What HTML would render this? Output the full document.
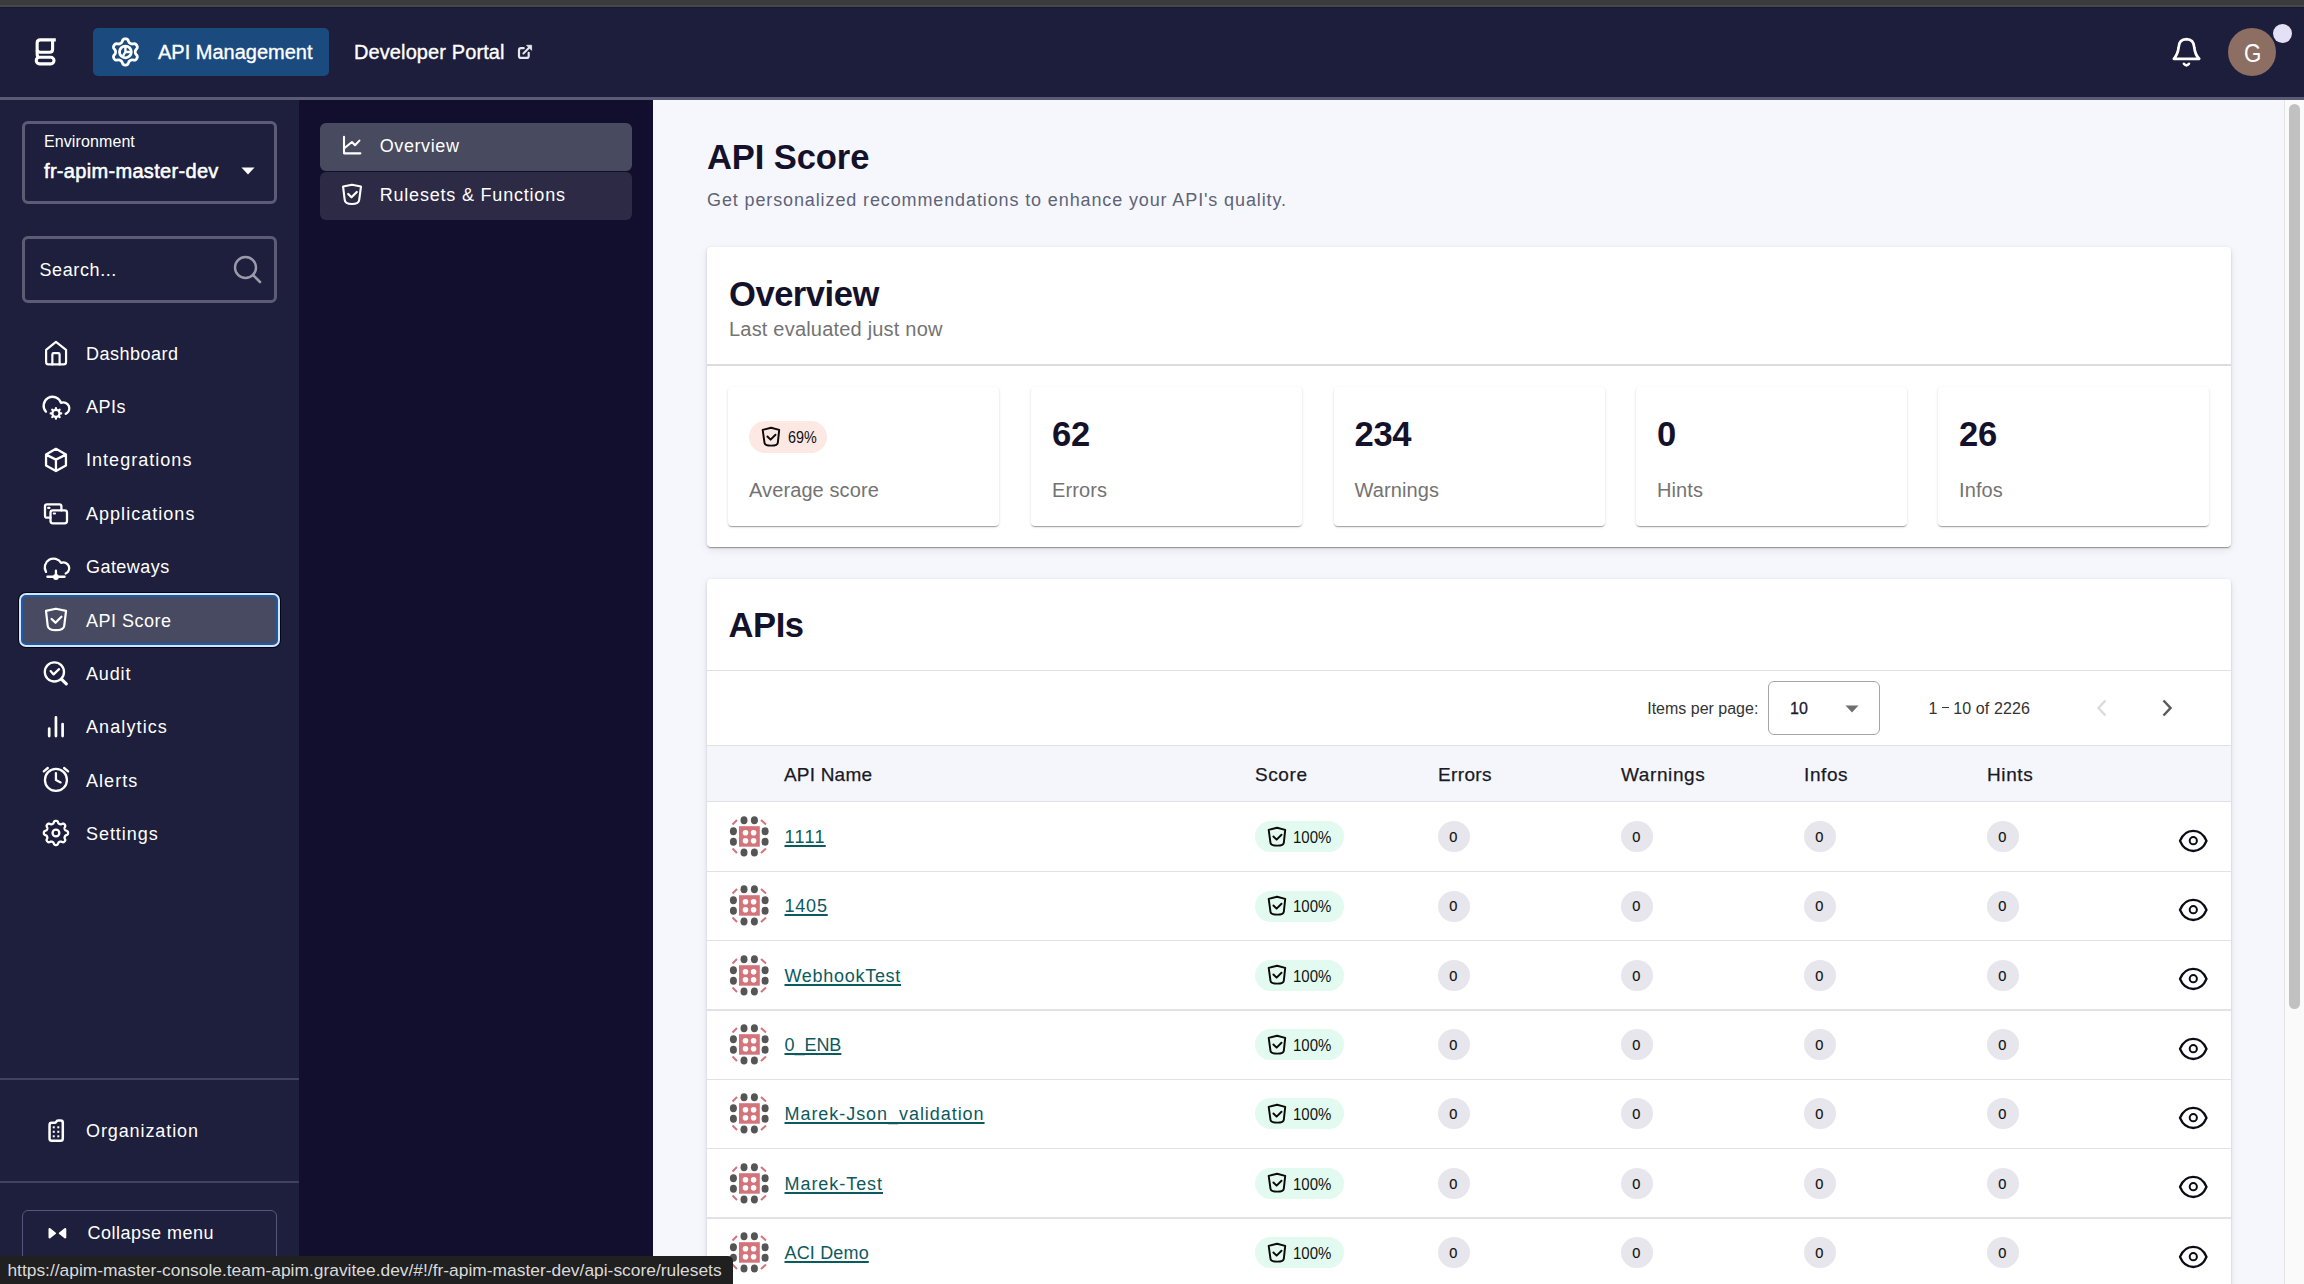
<!DOCTYPE html>
<html><head><meta charset="utf-8"><style>
html,body{margin:0;padding:0;width:2304px;height:1284px;overflow:hidden;background:#f6f7fc;font-family:"Liberation Sans", sans-serif;}
.r{position:absolute;display:block}
.t{position:absolute;white-space:nowrap;font-family:"Liberation Sans", sans-serif;}
</style></head><body>
<div class="r" style="left:0px;top:0px;width:2304px;height:5px;background:#3b3b3b"></div>
<div class="r" style="left:0px;top:5px;width:2304px;height:2px;background:#45464c"></div>
<div class="r" style="left:0px;top:7px;width:2304px;height:90px;background:#1d1e3b"></div>
<div class="r" style="left:0px;top:7px;width:2304px;height:1.2px;background:#191a2d"></div>
<div class="r" style="left:0px;top:97px;width:2304px;height:3px;background:#5a5c77"></div>
<div class="r" style="left:0px;top:100px;width:299px;height:1184px;background:#1e1f3c"></div>
<div class="r" style="left:299px;top:100px;width:354px;height:1184px;background:#120e2e"></div>
<div class="r" style="left:653px;top:100px;width:1631px;height:1184px;background:#f6f7fc"></div>
<div class="r" style="left:2284px;top:100px;width:20px;height:1184px;background:#fafafa;border-left:1px solid #e4e4e6;box-sizing:border-box"></div>
<div class="r" style="left:2289px;top:104px;width:11px;height:905px;background:#c1c1c1;border-radius:6px"></div>
<svg class="r" style="left:25px;top:32px;" width="40" height="40" viewBox="0 0 40 40"><path d="M30.8 7.9 H15.3 Q12.15 7.9 12.15 11 V17.3 Q12.15 20.25 15.1 20.25 H24.7 Q27.6 20.25 27.6 17.3 V7.9" fill="none" stroke="#fff" stroke-width="3.1" stroke-linejoin="round"/><path d="M12.15 18 V22.2 Q12.15 25.3 14.6 25.3 M14.6 25.3 H25.7 A3.3 3.3 0 0 1 25.7 31.9 H14.5 A3.3 3.3 0 0 1 14.6 25.3 Z" fill="none" stroke="#fff" stroke-width="3.1" stroke-linejoin="round"/></svg>
<div class="r" style="left:93px;top:28px;width:236px;height:48px;background:#1b4a7e;border-radius:5px"></div>
<svg class="r" style="left:105px;top:32px;" width="40" height="40" viewBox="0 0 40 40"><path d="M30.30 19.94 L30.30 20.20 L30.31 20.46 L30.33 20.72 L30.36 20.99 L30.42 21.26 L30.52 21.54 L30.68 21.84 L30.90 22.17 L31.19 22.53 L31.51 22.92 L31.82 23.32 L32.07 23.73 L32.23 24.13 L32.30 24.51 L32.31 24.87 L32.26 25.22 L32.17 25.55 L32.05 25.88 L31.91 26.19 L31.74 26.49 L31.56 26.78 L31.37 27.06 L31.15 27.33 L30.90 27.57 L30.63 27.79 L30.31 27.96 L29.94 28.09 L29.51 28.15 L29.04 28.14 L28.53 28.07 L28.04 27.99 L27.58 27.92 L27.19 27.89 L26.85 27.91 L26.56 27.96 L26.29 28.05 L26.04 28.15 L25.81 28.26 L25.58 28.39 L25.35 28.51 L25.13 28.65 L24.91 28.78 L24.69 28.93 L24.48 29.09 L24.27 29.28 L24.07 29.51 L23.89 29.79 L23.72 30.15 L23.55 30.58 L23.38 31.05 L23.18 31.52 L22.95 31.94 L22.69 32.28 L22.39 32.53 L22.08 32.72 L21.76 32.85 L21.42 32.94 L21.08 33.00 L20.74 33.03 L20.40 33.04 L20.06 33.03 L19.72 33.00 L19.38 32.94 L19.04 32.85 L18.72 32.72 L18.41 32.53 L18.11 32.28 L17.85 31.94 L17.62 31.52 L17.42 31.05 L17.25 30.58 L17.08 30.15 L16.91 29.79 L16.73 29.51 L16.53 29.28 L16.32 29.09 L16.11 28.93 L15.89 28.78 L15.67 28.65 L15.45 28.51 L15.22 28.39 L14.99 28.26 L14.76 28.15 L14.51 28.05 L14.24 27.96 L13.95 27.91 L13.61 27.89 L13.22 27.92 L12.76 27.99 L12.27 28.07 L11.76 28.14 L11.29 28.15 L10.86 28.09 L10.49 27.96 L10.17 27.79 L9.90 27.57 L9.65 27.33 L9.43 27.06 L9.24 26.78 L9.06 26.49 L8.89 26.19 L8.75 25.88 L8.63 25.55 L8.54 25.22 L8.49 24.87 L8.50 24.51 L8.57 24.13 L8.73 23.73 L8.98 23.32 L9.29 22.92 L9.61 22.53 L9.90 22.17 L10.12 21.84 L10.28 21.54 L10.38 21.26 L10.44 20.99 L10.47 20.72 L10.49 20.46 L10.50 20.20 L10.50 19.94 L10.50 19.68 L10.49 19.42 L10.47 19.16 L10.44 18.89 L10.38 18.62 L10.28 18.34 L10.12 18.04 L9.90 17.71 L9.61 17.35 L9.29 16.96 L8.98 16.56 L8.73 16.15 L8.57 15.75 L8.50 15.37 L8.49 15.01 L8.54 14.66 L8.63 14.33 L8.75 14.00 L8.89 13.69 L9.06 13.39 L9.24 13.10 L9.43 12.82 L9.65 12.55 L9.90 12.31 L10.17 12.09 L10.49 11.92 L10.86 11.79 L11.29 11.73 L11.76 11.74 L12.27 11.81 L12.76 11.89 L13.22 11.96 L13.61 11.99 L13.95 11.97 L14.24 11.92 L14.51 11.83 L14.76 11.73 L14.99 11.62 L15.22 11.49 L15.45 11.37 L15.67 11.23 L15.89 11.10 L16.11 10.95 L16.32 10.79 L16.53 10.60 L16.73 10.37 L16.91 10.09 L17.08 9.73 L17.25 9.30 L17.42 8.83 L17.62 8.36 L17.85 7.94 L18.11 7.60 L18.41 7.35 L18.72 7.16 L19.04 7.03 L19.38 6.94 L19.72 6.88 L20.06 6.85 L20.40 6.84 L20.74 6.85 L21.08 6.88 L21.42 6.94 L21.76 7.03 L22.08 7.16 L22.39 7.35 L22.69 7.60 L22.95 7.94 L23.18 8.36 L23.38 8.83 L23.55 9.30 L23.72 9.73 L23.89 10.09 L24.07 10.37 L24.27 10.60 L24.48 10.79 L24.69 10.95 L24.91 11.10 L25.13 11.23 L25.35 11.37 L25.58 11.49 L25.81 11.62 L26.04 11.73 L26.29 11.83 L26.56 11.92 L26.85 11.97 L27.19 11.99 L27.58 11.96 L28.04 11.89 L28.53 11.81 L29.04 11.74 L29.51 11.73 L29.94 11.79 L30.31 11.92 L30.63 12.09 L30.90 12.31 L31.15 12.55 L31.37 12.82 L31.56 13.10 L31.74 13.39 L31.91 13.69 L32.05 14.00 L32.17 14.33 L32.26 14.66 L32.31 15.01 L32.30 15.37 L32.23 15.75 L32.07 16.15 L31.82 16.56 L31.51 16.96 L31.19 17.35 L30.90 17.71 L30.68 18.04 L30.52 18.34 L30.42 18.62 L30.36 18.89 L30.33 19.16 L30.31 19.42 L30.30 19.68 Z" fill="none" stroke="#fff" stroke-width="2.8" stroke-linejoin="round"/><circle cx="20.4" cy="19.94" r="5.9" fill="none" stroke="#fff" stroke-width="2.8"/><path d="M20.4 14.5 V19.94 H25.5 M20.4 19.94 L18 24" fill="none" stroke="#fff" stroke-width="2.4"/></svg>
<div class="t" style="left:158px;top:42.07px;font-size:20px;line-height:20px;color:#fff;font-weight:normal;-webkit-text-stroke:0.35px #fff;letter-spacing:0px">API Management</div>
<div class="t" style="left:354px;top:42.07px;font-size:20px;line-height:20px;color:#fff;font-weight:normal;-webkit-text-stroke:0.35px #fff;letter-spacing:0.1px">Developer Portal</div>
<svg class="r" style="left:505px;top:32px;" width="40" height="40" viewBox="0 0 40 40"><path d="M18.7 16.2 H16 Q14 16.2 14 18.2 V23.9 Q14 25.9 16 25.9 H21.7 Q23.7 25.9 23.7 23.9 V20.8" fill="none" stroke="#e6e6f0" stroke-width="2.2" stroke-linecap="round"/><path d="M18.4 21.5 L24.5 15.3" stroke="#e6e6f0" stroke-width="2" stroke-linecap="round"/><path d="M21.6 13.3 H26.6 V18.3 Z" fill="#e6e6f0" stroke="#e6e6f0" stroke-width="0.8" stroke-linejoin="round"/></svg>
<svg class="r" style="left:2166px;top:32px;" width="40" height="40" viewBox="0 0 40 40"><path d="M7.8 26.8 Q11.8 22.5 12.6 15.5 Q13 7.3 20.4 7.2 Q27.8 7.3 28.3 15.5 Q29 22.5 33.2 26.8 Z" fill="none" stroke="#fff" stroke-width="2.7" stroke-linejoin="round"/><path d="M17.9 31.8 Q20.4 35 23 31.8" fill="none" stroke="#fff" stroke-width="2.6" stroke-linecap="round"/></svg>
<div class="r" style="left:2228px;top:28px;width:48px;height:48px;background:#8d6e63;border-radius:50%"></div>
<div class="t" style="left:2244px;top:39.59px;font-size:26px;line-height:26px;color:#fff;font-weight:normal;transform:scaleX(0.86);transform-origin:0 0">G</div>
<div class="r" style="left:2273px;top:24px;width:19px;height:19px;background:#e4e1f6;border-radius:50%"></div>
<div class="r" style="left:22px;top:121px;width:255px;height:83px;border:3.5px solid #5c5c76;border-radius:6px;box-sizing:border-box"></div>
<div class="t" style="left:44px;top:134.06px;font-size:16px;line-height:16px;color:#fff;font-weight:normal;letter-spacing:0.1px">Environment</div>
<div class="t" style="left:44px;top:161.07px;font-size:20px;line-height:20px;color:#fff;font-weight:normal;letter-spacing:0.32px;-webkit-text-stroke:0.55px #fff">fr-apim-master-dev</div>
<svg class="r" style="left:241px;top:167px;" width="14" height="8" viewBox="0 0 14 8"><path d="M0.5 0.5 H13.5 L7 7.5 Z" fill="#fff"/></svg>
<div class="r" style="left:22px;top:236px;width:255px;height:67px;border:3.5px solid #5c5c76;border-radius:6px;box-sizing:border-box"></div>
<div class="t" style="left:39.5px;top:260.76px;font-size:18px;line-height:18px;color:#fff;font-weight:normal;letter-spacing:0.6px">Search...</div>
<svg class="r" style="left:232px;top:254px;" width="32" height="32" viewBox="0 0 32 32"><circle cx="13.5" cy="13.5" r="10.5" fill="none" stroke="#9a9aaa" stroke-width="2.4"/><path d="M21 21 L28 28" stroke="#9a9aaa" stroke-width="2.6" stroke-linecap="round"/></svg>
<svg class="r" style="left:36px;top:335px;" width="40" height="40" viewBox="0 0 40 40"><path d="M10.1 14.8 L19.94 6.9 L30.06 14.8 V27 Q30.06 29.4 27.6 29.4 H12.5 Q10.1 29.4 10.1 27 Z" fill="none" stroke="#fff" stroke-width="2.2" stroke-linecap="round" stroke-linejoin="round"/><path d="M16.35 29.4 V19.4 Q16.35 18.07 17.7 18.07 H22.2 Q23.6 18.07 23.6 19.4 V29.4" fill="none" stroke="#fff" stroke-width="2.2" stroke-linecap="round" stroke-linejoin="round"/></svg>
<div class="t" style="left:86px;top:344.56px;font-size:18px;line-height:18px;color:#fff;font-weight:normal;letter-spacing:0.5px">Dashboard</div>
<svg class="r" style="left:36px;top:388px;" width="40" height="40" viewBox="0 0 40 40"><path d="M10 23.7 A8.9 8.9 0 1 1 25 14.9 A5.8 5.8 0 0 1 29.7 25.9" fill="none" stroke="#fff" stroke-width="2.3" stroke-linecap="round" stroke-linejoin="round"/><path fill="#fff" fill-rule="evenodd" d="M26.24 25.40 L26.24 25.56 L26.22 25.73 L26.19 25.89 L26.14 26.05 L26.03 26.20 L25.83 26.33 L25.49 26.43 L25.08 26.49 L24.74 26.55 L24.53 26.63 L24.41 26.73 L24.34 26.83 L24.29 26.94 L24.24 27.05 L24.19 27.16 L24.14 27.27 L24.10 27.38 L24.06 27.50 L24.04 27.63 L24.06 27.78 L24.15 27.98 L24.35 28.26 L24.59 28.60 L24.77 28.91 L24.82 29.14 L24.78 29.32 L24.71 29.47 L24.61 29.61 L24.51 29.74 L24.39 29.85 L24.28 29.97 L24.15 30.07 L24.01 30.17 L23.86 30.24 L23.68 30.28 L23.45 30.23 L23.14 30.05 L22.80 29.81 L22.52 29.61 L22.32 29.52 L22.17 29.50 L22.04 29.52 L21.92 29.56 L21.81 29.60 L21.70 29.65 L21.59 29.70 L21.48 29.75 L21.37 29.80 L21.27 29.87 L21.17 29.99 L21.09 30.20 L21.03 30.54 L20.97 30.95 L20.87 31.29 L20.74 31.49 L20.59 31.60 L20.43 31.65 L20.27 31.68 L20.10 31.70 L19.94 31.70 L19.78 31.70 L19.61 31.68 L19.45 31.65 L19.29 31.60 L19.14 31.49 L19.01 31.29 L18.91 30.95 L18.85 30.54 L18.79 30.20 L18.71 29.99 L18.61 29.87 L18.51 29.80 L18.40 29.75 L18.29 29.70 L18.18 29.65 L18.07 29.60 L17.96 29.56 L17.84 29.52 L17.71 29.50 L17.56 29.52 L17.36 29.61 L17.08 29.81 L16.74 30.05 L16.43 30.23 L16.20 30.28 L16.02 30.24 L15.87 30.17 L15.73 30.07 L15.60 29.97 L15.49 29.85 L15.37 29.74 L15.27 29.61 L15.17 29.47 L15.10 29.32 L15.06 29.14 L15.11 28.91 L15.29 28.60 L15.53 28.26 L15.73 27.98 L15.82 27.78 L15.84 27.63 L15.82 27.50 L15.78 27.38 L15.74 27.27 L15.69 27.16 L15.64 27.05 L15.59 26.94 L15.54 26.83 L15.47 26.73 L15.35 26.63 L15.14 26.55 L14.80 26.49 L14.39 26.43 L14.05 26.33 L13.85 26.20 L13.74 26.05 L13.69 25.89 L13.66 25.73 L13.64 25.56 L13.64 25.40 L13.64 25.24 L13.66 25.07 L13.69 24.91 L13.74 24.75 L13.85 24.60 L14.05 24.47 L14.39 24.37 L14.80 24.31 L15.14 24.25 L15.35 24.17 L15.47 24.07 L15.54 23.97 L15.59 23.86 L15.64 23.75 L15.69 23.64 L15.74 23.53 L15.78 23.42 L15.82 23.30 L15.84 23.17 L15.82 23.02 L15.73 22.82 L15.53 22.54 L15.29 22.20 L15.11 21.89 L15.06 21.66 L15.10 21.48 L15.17 21.33 L15.27 21.19 L15.37 21.06 L15.49 20.95 L15.60 20.83 L15.73 20.73 L15.87 20.63 L16.02 20.56 L16.20 20.52 L16.43 20.57 L16.74 20.75 L17.08 20.99 L17.36 21.19 L17.56 21.28 L17.71 21.30 L17.84 21.28 L17.96 21.24 L18.07 21.20 L18.18 21.15 L18.29 21.10 L18.40 21.05 L18.51 21.00 L18.61 20.93 L18.71 20.81 L18.79 20.60 L18.85 20.26 L18.91 19.85 L19.01 19.51 L19.14 19.31 L19.29 19.20 L19.45 19.15 L19.61 19.12 L19.78 19.10 L19.94 19.10 L20.10 19.10 L20.27 19.12 L20.43 19.15 L20.59 19.20 L20.74 19.31 L20.87 19.51 L20.97 19.85 L21.03 20.26 L21.09 20.60 L21.17 20.81 L21.27 20.93 L21.37 21.00 L21.48 21.05 L21.59 21.10 L21.70 21.15 L21.81 21.20 L21.92 21.24 L22.04 21.28 L22.17 21.30 L22.32 21.28 L22.52 21.19 L22.80 20.99 L23.14 20.75 L23.45 20.57 L23.68 20.52 L23.86 20.56 L24.01 20.63 L24.15 20.73 L24.28 20.83 L24.39 20.95 L24.51 21.06 L24.61 21.19 L24.71 21.33 L24.78 21.48 L24.82 21.66 L24.77 21.89 L24.59 22.20 L24.35 22.54 L24.15 22.82 L24.06 23.02 L24.04 23.17 L24.06 23.30 L24.10 23.42 L24.14 23.53 L24.19 23.64 L24.24 23.75 L24.29 23.86 L24.34 23.97 L24.41 24.07 L24.53 24.17 L24.74 24.25 L25.08 24.31 L25.49 24.37 L25.83 24.47 L26.03 24.60 L26.14 24.75 L26.19 24.91 L26.22 25.07 L26.24 25.24 Z M22.4 25.4 A2.46 2.46 0 1 0 17.48 25.4 A2.46 2.46 0 1 0 22.4 25.4 Z"/></svg>
<div class="t" style="left:86px;top:397.96px;font-size:18px;line-height:18px;color:#fff;font-weight:normal;letter-spacing:0.5px">APIs</div>
<svg class="r" style="left:36px;top:441px;" width="40" height="40" viewBox="0 0 40 40"><path d="M19.94 7.8 L29.95 13.6 V24.4 L19.94 30 L10.05 24.4 V13.6 Z M10.05 13.6 L19.94 18.6 L29.95 13.6 M19.94 18.6 V30" fill="none" stroke="#fff" stroke-width="2.3" stroke-linecap="round" stroke-linejoin="round"/></svg>
<div class="t" style="left:86px;top:451.36px;font-size:18px;line-height:18px;color:#fff;font-weight:normal;letter-spacing:1.03px">Integrations</div>
<svg class="r" style="left:36px;top:494px;" width="40" height="40" viewBox="0 0 40 40"><path d="M14.5 23.7 H11 Q9 23.7 9 21.7 V12.3 Q9 10.3 11 10.3 H23.4 Q25.4 10.3 25.4 12.3 V16.4" fill="none" stroke="#fff" stroke-width="2.3" stroke-linecap="round" stroke-linejoin="round"/><rect x="14.5" y="16.4" width="16.5" height="13" rx="2.3" fill="none" stroke="#fff" stroke-width="2.3" stroke-linecap="round" stroke-linejoin="round"/><path d="M12.2 13.9 h1.2 M17.8 19.5 h1.2" fill="none" stroke="#fff" stroke-width="2.2" stroke-linecap="round" stroke-linejoin="round"/></svg>
<div class="t" style="left:86px;top:504.76px;font-size:18px;line-height:18px;color:#fff;font-weight:normal;letter-spacing:1.03px">Applications</div>
<svg class="r" style="left:36px;top:547px;" width="40" height="40" viewBox="0 0 40 40"><path d="M10 24.9 A8.6 8.6 0 1 1 25.2 15.9 A5.4 5.4 0 0 1 29.7 26.5" fill="none" stroke="#fff" stroke-width="2.3" stroke-linecap="round" stroke-linejoin="round"/><path d="M19.94 23.7 V29 M11.4 29.75 H28.6" fill="none" stroke="#fff" stroke-width="2.3" stroke-linecap="round" stroke-linejoin="round"/><circle cx="19.94" cy="30" r="2.9" fill="#fff"/></svg>
<div class="t" style="left:86px;top:558.16px;font-size:18px;line-height:18px;color:#fff;font-weight:normal;letter-spacing:0.45px">Gateways</div>
<div class="r" style="left:19px;top:593px;width:261px;height:54px;border:2px solid #cfe4ff;border-radius:7px;box-sizing:border-box;background:#474a61;box-shadow:0 0 0 1px #05050f, inset 0 0 0 2px #1e5aa6"></div>
<svg class="r" style="left:36px;top:600px;" width="40" height="40" viewBox="0 0 40 40"><path d="M10 10.9 L19.94 8.7 L30.06 10.9 L28.2 25.8 Q27.6 30.2 19.94 30.2 Q12.3 30.2 11.7 25.8 Z" fill="none" stroke="#fff" stroke-width="2.2" stroke-linecap="round" stroke-linejoin="round"/><path d="M15.6 19 L19.5 22.7 L25.4 16.8" fill="none" stroke="#fff" stroke-width="2.3" stroke-linecap="round" stroke-linejoin="round"/></svg>
<div class="t" style="left:86px;top:611.56px;font-size:18px;line-height:18px;color:#fff;font-weight:normal;letter-spacing:0.5px">API Score</div>
<svg class="r" style="left:36px;top:654px;" width="40" height="40" viewBox="0 0 40 40"><circle cx="18.4" cy="17.9" r="9.6" fill="none" stroke="#fff" stroke-width="2.3" stroke-linecap="round" stroke-linejoin="round"/><path d="M25.4 25.2 L30.3 29.9" fill="none" stroke="#fff" stroke-width="3.2" stroke-linecap="round" stroke-linejoin="round"/><path d="M14.6 17.1 L17.6 20.4 L23.05 15.2" fill="none" stroke="#fff" stroke-width="2.3" stroke-linecap="round" stroke-linejoin="round"/></svg>
<div class="t" style="left:86px;top:664.96px;font-size:18px;line-height:18px;color:#fff;font-weight:normal;letter-spacing:0.85px">Audit</div>
<svg class="r" style="left:36px;top:707px;" width="40" height="40" viewBox="0 0 40 40"><path d="M13.2 21.5 V29.1 M19.94 10.3 V29.1 M26.6 17 V29.1" fill="none" stroke="#fff" stroke-width="2.7" stroke-linecap="round" stroke-linejoin="round"/></svg>
<div class="t" style="left:86px;top:718.36px;font-size:18px;line-height:18px;color:#fff;font-weight:normal;letter-spacing:1.1px">Analytics</div>
<svg class="r" style="left:36px;top:760px;" width="40" height="40" viewBox="0 0 40 40"><circle cx="19.94" cy="19.94" r="11" fill="none" stroke="#fff" stroke-width="2.3" stroke-linecap="round" stroke-linejoin="round"/><path d="M19.94 13.1 V19.94 L24.6 22.4" fill="none" stroke="#fff" stroke-width="2.3" stroke-linecap="round" stroke-linejoin="round"/><path d="M7.8 11.4 L11.8 8 M32.1 11.4 L28.1 8" fill="none" stroke="#fff" stroke-width="2.3" stroke-linecap="round" stroke-linejoin="round"/></svg>
<div class="t" style="left:86px;top:771.76px;font-size:18px;line-height:18px;color:#fff;font-weight:normal;letter-spacing:1.05px">Alerts</div>
<svg class="r" style="left:36px;top:813px;" width="40" height="40" viewBox="0 0 40 40"><path d="M32.04 19.94 L32.03 20.26 L31.99 20.57 L31.92 20.88 L31.80 21.19 L31.59 21.47 L31.27 21.73 L30.83 21.96 L30.33 22.15 L29.89 22.33 L29.55 22.52 L29.32 22.72 L29.15 22.93 L29.02 23.16 L28.91 23.38 L28.81 23.61 L28.72 23.85 L28.63 24.09 L28.57 24.34 L28.53 24.61 L28.56 24.91 L28.66 25.28 L28.85 25.73 L29.07 26.21 L29.22 26.68 L29.26 27.09 L29.20 27.44 L29.08 27.74 L28.91 28.01 L28.71 28.26 L28.50 28.50 L28.26 28.71 L28.01 28.91 L27.74 29.08 L27.44 29.20 L27.09 29.26 L26.68 29.22 L26.21 29.07 L25.73 28.85 L25.28 28.66 L24.91 28.56 L24.61 28.53 L24.34 28.57 L24.09 28.63 L23.85 28.72 L23.61 28.81 L23.38 28.91 L23.16 29.02 L22.93 29.15 L22.72 29.32 L22.52 29.55 L22.33 29.89 L22.15 30.33 L21.96 30.83 L21.73 31.27 L21.47 31.59 L21.19 31.80 L20.88 31.92 L20.57 31.99 L20.26 32.03 L19.94 32.04 L19.62 32.03 L19.31 31.99 L19.00 31.92 L18.69 31.80 L18.41 31.59 L18.15 31.27 L17.92 30.83 L17.73 30.33 L17.55 29.89 L17.36 29.55 L17.16 29.32 L16.95 29.15 L16.72 29.02 L16.50 28.91 L16.27 28.81 L16.03 28.72 L15.79 28.63 L15.54 28.57 L15.27 28.53 L14.97 28.56 L14.60 28.66 L14.15 28.85 L13.67 29.07 L13.20 29.22 L12.79 29.26 L12.44 29.20 L12.14 29.08 L11.87 28.91 L11.62 28.71 L11.38 28.50 L11.17 28.26 L10.97 28.01 L10.80 27.74 L10.68 27.44 L10.62 27.09 L10.66 26.68 L10.81 26.21 L11.03 25.73 L11.22 25.28 L11.32 24.91 L11.35 24.61 L11.31 24.34 L11.25 24.09 L11.16 23.85 L11.07 23.61 L10.97 23.38 L10.86 23.16 L10.73 22.93 L10.56 22.72 L10.33 22.52 L9.99 22.33 L9.55 22.15 L9.05 21.96 L8.61 21.73 L8.29 21.47 L8.08 21.19 L7.96 20.88 L7.89 20.57 L7.85 20.26 L7.84 19.94 L7.85 19.62 L7.89 19.31 L7.96 19.00 L8.08 18.69 L8.29 18.41 L8.61 18.15 L9.05 17.92 L9.55 17.73 L9.99 17.55 L10.33 17.36 L10.56 17.16 L10.73 16.95 L10.86 16.72 L10.97 16.50 L11.07 16.27 L11.16 16.03 L11.25 15.79 L11.31 15.54 L11.35 15.27 L11.32 14.97 L11.22 14.60 L11.03 14.15 L10.81 13.67 L10.66 13.20 L10.62 12.79 L10.68 12.44 L10.80 12.14 L10.97 11.87 L11.17 11.62 L11.38 11.38 L11.62 11.17 L11.87 10.97 L12.14 10.80 L12.44 10.68 L12.79 10.62 L13.20 10.66 L13.67 10.81 L14.15 11.03 L14.60 11.22 L14.97 11.32 L15.27 11.35 L15.54 11.31 L15.79 11.25 L16.03 11.16 L16.27 11.07 L16.50 10.97 L16.72 10.86 L16.95 10.73 L17.16 10.56 L17.36 10.33 L17.55 9.99 L17.73 9.55 L17.92 9.05 L18.15 8.61 L18.41 8.29 L18.69 8.08 L19.00 7.96 L19.31 7.89 L19.62 7.85 L19.94 7.84 L20.26 7.85 L20.57 7.89 L20.88 7.96 L21.19 8.08 L21.47 8.29 L21.73 8.61 L21.96 9.05 L22.15 9.55 L22.33 9.99 L22.52 10.33 L22.72 10.56 L22.93 10.73 L23.16 10.86 L23.38 10.97 L23.61 11.07 L23.85 11.16 L24.09 11.25 L24.34 11.31 L24.61 11.35 L24.91 11.32 L25.28 11.22 L25.73 11.03 L26.21 10.81 L26.68 10.66 L27.09 10.62 L27.44 10.68 L27.74 10.80 L28.01 10.97 L28.26 11.17 L28.50 11.38 L28.71 11.62 L28.91 11.87 L29.08 12.14 L29.20 12.44 L29.26 12.79 L29.22 13.20 L29.07 13.67 L28.85 14.15 L28.66 14.60 L28.56 14.97 L28.53 15.27 L28.57 15.54 L28.63 15.79 L28.72 16.03 L28.81 16.27 L28.91 16.50 L29.02 16.72 L29.15 16.95 L29.32 17.16 L29.55 17.36 L29.89 17.55 L30.33 17.73 L30.83 17.92 L31.27 18.15 L31.59 18.41 L31.80 18.69 L31.92 19.00 L31.99 19.31 L32.03 19.62 Z" fill="none" stroke="#fff" stroke-width="2.3" stroke-linecap="round" stroke-linejoin="round"/><circle cx="19.94" cy="19.94" r="3.4" fill="none" stroke="#fff" stroke-width="2.3" stroke-linecap="round" stroke-linejoin="round"/></svg>
<div class="t" style="left:86px;top:825.16px;font-size:18px;line-height:18px;color:#fff;font-weight:normal;letter-spacing:0.95px">Settings</div>
<div class="r" style="left:0px;top:1078px;width:299px;height:2px;background:#414260"></div>
<div class="r" style="left:0px;top:1180.5px;width:299px;height:2px;background:#414260"></div>
<svg class="r" style="left:36px;top:1110px;" width="40" height="40" viewBox="0 0 40 40"><path d="M13.55 28.4 V15 Q13.55 12.8 15.7 12.8 H18.7 Q19.6 12.8 20.1 11.9 Q20.7 10.6 22.2 10.6 H24.7 Q26.8 10.6 26.8 12.7 V28.4 Q26.8 30.7 24.6 30.7 H15.8 Q13.55 30.7 13.55 28.4 Z" fill="none" stroke="#fff" stroke-width="2.5" stroke-linecap="round" stroke-linejoin="round"/><g fill="#fff"><rect x="16.75" y="16.3" width="2" height="2"/><rect x="21.3" y="16.3" width="2" height="2"/><rect x="16.75" y="20.8" width="2" height="2"/><rect x="21.3" y="20.8" width="2" height="2"/><rect x="16.75" y="25.3" width="2" height="2"/><rect x="21.3" y="25.3" width="2" height="2"/></g></svg>
<div class="t" style="left:86px;top:1121.76px;font-size:18px;line-height:18px;color:#fff;font-weight:normal;letter-spacing:0.9px">Organization</div>
<div class="r" style="left:22px;top:1209.5px;width:255px;height:80px;border:1.5px solid #55577a;border-radius:6px;box-sizing:border-box"></div>
<svg class="r" style="left:36px;top:1213px;" width="40" height="40" viewBox="0 0 40 40"><path d="M13.6 16.2 L18.9 20.25 L13.6 24.4 Z M29.2 16.2 L23.9 20.25 L29.2 24.4 Z" fill="#fff" stroke="#fff" stroke-width="2.2" stroke-linejoin="round"/></svg>
<div class="t" style="left:87.4px;top:1224.26px;font-size:18px;line-height:18px;color:#fff;font-weight:normal;letter-spacing:0.5px">Collapse menu</div>
<div class="r" style="left:320px;top:123px;width:312px;height:48px;background:#484a5f;border-radius:6px"></div>
<div class="r" style="left:320px;top:172px;width:312px;height:48px;background:#2c2a45;border-radius:6px"></div>
<svg class="r" style="left:332px;top:125px;" width="40" height="40" viewBox="0 0 40 40"><path d="M12 11.8 V28.35 H28.35 M12 23.5 L19.94 17 L23.05 20.25 L27.4 15.6" fill="none" stroke="#fff" stroke-width="2.1" stroke-linecap="round" stroke-linejoin="round"/></svg>
<div class="t" style="left:379.7px;top:136.96px;font-size:18px;line-height:18px;color:#fff;font-weight:normal;letter-spacing:0.6px">Overview</div>
<svg class="r" style="left:332px;top:175px;" width="40" height="40" viewBox="0 0 40 40"><path d="M11.06 11.5 L19.94 9.66 L29 11.5 L27.2 24.8 Q26.8 29 19.94 29 Q13.1 29 12.7 24.8 Z" fill="none" stroke="#fff" stroke-width="2.1" stroke-linecap="round" stroke-linejoin="round"/><path d="M16.2 19 L19.5 22.3 L24.8 17" fill="none" stroke="#fff" stroke-width="2.2" stroke-linecap="round" stroke-linejoin="round"/></svg>
<div class="t" style="left:379.7px;top:186.16px;font-size:18px;line-height:18px;color:#fff;font-weight:normal;letter-spacing:0.8px">Rulesets &amp; Functions</div>
<div class="t" style="left:707px;top:140.31px;font-size:34.6px;line-height:34.6px;color:#14112b;font-weight:bold;letter-spacing:-0.12px">API Score</div>
<div class="t" style="left:707px;top:191.16px;font-size:18px;line-height:18px;color:#5f6377;font-weight:normal;letter-spacing:0.88px">Get personalized recommendations to enhance your API&#39;s quality.</div>
<div class="r" style="left:707px;top:247px;width:1524px;height:300px;background:#fff;border-radius:4px;box-shadow:0 2px 1px -1px rgba(0,0,0,.2),0 1px 1px 0 rgba(0,0,0,.14),0 1px 3px 0 rgba(0,0,0,.12),0 3px 10px 0 rgba(20,20,60,.08)"></div>
<div class="t" style="left:729px;top:276.51px;font-size:34.6px;line-height:34.6px;color:#14112b;font-weight:bold;letter-spacing:-0.5px">Overview</div>
<div class="t" style="left:729px;top:319.07px;font-size:20px;line-height:20px;color:#737373;font-weight:normal;letter-spacing:0.2px">Last evaluated just now</div>
<div class="r" style="left:707px;top:364px;width:1524px;height:1.5px;background:#dcdce0"></div>
<div class="r" style="left:728px;top:387px;width:271px;height:139px;background:#fff;border-radius:4px;box-shadow:0 2px 1px -1px rgba(0,0,0,.2),0 1px 1px 0 rgba(0,0,0,.14),0 1px 3px 0 rgba(0,0,0,.12)"></div>
<div class="r" style="left:749px;top:420.5px;width:78px;height:32px;background:#fde8e3;border-radius:16px"></div>
<svg class="r" style="left:759.3px;top:424.5px;" width="24" height="24" viewBox="0 0 24 24"><path d="M3.7 4.9 L12.1 2.8 L20.2 4.9 L18.8 17.8 Q18.5 20.6 12.1 20.6 Q5.8 20.6 5.5 17.8 Z" fill="none" stroke="#0b0b0b" stroke-width="1.95" stroke-linejoin="round"/><path d="M8.4 11.5 L11.6 14.6 L16.5 9.7" fill="none" stroke="#0b0b0b" stroke-width="1.95" stroke-linecap="round" stroke-linejoin="round"/></svg>
<div class="t" style="left:787.6px;top:429.40px;font-size:16.3px;line-height:16.3px;color:#111;font-weight:normal;letter-spacing:0px;transform:scaleX(0.88);transform-origin:0 0">69%</div>
<div class="t" style="left:749px;top:480.27px;font-size:20px;line-height:20px;color:#737373;font-weight:normal;letter-spacing:0.1px">Average score</div>
<div class="r" style="left:1031px;top:387px;width:271px;height:139px;background:#fff;border-radius:4px;box-shadow:0 2px 1px -1px rgba(0,0,0,.2),0 1px 1px 0 rgba(0,0,0,.14),0 1px 3px 0 rgba(0,0,0,.12)"></div>
<div class="t" style="left:1052px;top:416.61px;font-size:34.6px;line-height:34.6px;color:#14112b;font-weight:bold;letter-spacing:-0.3px">62</div>
<div class="t" style="left:1052px;top:480.27px;font-size:20px;line-height:20px;color:#737373;font-weight:normal;letter-spacing:0.1px">Errors</div>
<div class="r" style="left:1333.5px;top:387px;width:271px;height:139px;background:#fff;border-radius:4px;box-shadow:0 2px 1px -1px rgba(0,0,0,.2),0 1px 1px 0 rgba(0,0,0,.14),0 1px 3px 0 rgba(0,0,0,.12)"></div>
<div class="t" style="left:1354.5px;top:416.61px;font-size:34.6px;line-height:34.6px;color:#14112b;font-weight:bold;letter-spacing:-0.3px">234</div>
<div class="t" style="left:1354.5px;top:480.27px;font-size:20px;line-height:20px;color:#737373;font-weight:normal;letter-spacing:0.1px">Warnings</div>
<div class="r" style="left:1636px;top:387px;width:271px;height:139px;background:#fff;border-radius:4px;box-shadow:0 2px 1px -1px rgba(0,0,0,.2),0 1px 1px 0 rgba(0,0,0,.14),0 1px 3px 0 rgba(0,0,0,.12)"></div>
<div class="t" style="left:1657px;top:416.61px;font-size:34.6px;line-height:34.6px;color:#14112b;font-weight:bold;letter-spacing:-0.3px">0</div>
<div class="t" style="left:1657px;top:480.27px;font-size:20px;line-height:20px;color:#737373;font-weight:normal;letter-spacing:0.1px">Hints</div>
<div class="r" style="left:1938px;top:387px;width:271px;height:139px;background:#fff;border-radius:4px;box-shadow:0 2px 1px -1px rgba(0,0,0,.2),0 1px 1px 0 rgba(0,0,0,.14),0 1px 3px 0 rgba(0,0,0,.12)"></div>
<div class="t" style="left:1959px;top:416.61px;font-size:34.6px;line-height:34.6px;color:#14112b;font-weight:bold;letter-spacing:-0.3px">26</div>
<div class="t" style="left:1959px;top:480.27px;font-size:20px;line-height:20px;color:#737373;font-weight:normal;letter-spacing:0.1px">Infos</div>
<div class="r" style="left:707px;top:579px;width:1524px;height:760px;background:#fff;border-radius:4px;box-shadow:0 2px 1px -1px rgba(0,0,0,.2),0 1px 1px 0 rgba(0,0,0,.14),0 1px 3px 0 rgba(0,0,0,.12),0 3px 10px 0 rgba(20,20,60,.08)"></div>
<div class="t" style="left:728.4px;top:608.31px;font-size:34.6px;line-height:34.6px;color:#14112b;font-weight:bold;letter-spacing:-0.4px">APIs</div>
<div class="r" style="left:707px;top:669.5px;width:1524px;height:1.5px;background:#e0e0e4"></div>
<div class="t" style="left:1647.2px;top:700.96px;font-size:16px;line-height:16px;color:#333;font-weight:normal;letter-spacing:0px">Items per page:</div>
<div class="r" style="left:1767.7px;top:680.6px;width:112px;height:54px;border:1.8px solid #a4a4a4;border-radius:6px;box-sizing:border-box"></div>
<div class="t" style="left:1790px;top:700.96px;font-size:16px;line-height:16px;color:#1a1a2e;font-weight:normal;-webkit-text-stroke:0.3px #1a1a2e">10</div>
<svg class="r" style="left:1845px;top:704.5px;" width="14" height="8" viewBox="0 0 14 8"><path d="M0.5 0.5 H13.5 L7 7.5 Z" fill="#6e6e6e"/></svg>
<div class="t" style="left:1928.6px;top:700.96px;font-size:16px;line-height:16px;color:#333;font-weight:normal;letter-spacing:0.1px">1<span style="display:inline-block;width:6.5px;height:1.8px;background:#333;vertical-align:5.6px;margin:0 4.3px 0 4.9px"></span>10 of 2226</div>
<svg class="r" style="left:2094px;top:698px;" width="16" height="20" viewBox="0 0 16 20"><path d="M11.5 2.5 L4.5 10 L11.5 17.5" fill="none" stroke="#dcdcdc" stroke-width="2.5"/></svg>
<svg class="r" style="left:2159px;top:698px;" width="16" height="20" viewBox="0 0 16 20"><path d="M4.5 2.5 L11.5 10 L4.5 17.5" fill="none" stroke="#5a5a5a" stroke-width="2.5"/></svg>
<div class="r" style="left:707px;top:745px;width:1524px;height:57px;background:#f5f6fb;border-top:1.5px solid #dfe0e4;border-bottom:1.5px solid #dfe0e4;box-sizing:border-box"></div>
<div class="t" style="left:784px;top:764.72px;font-size:19px;line-height:19px;color:#1a1a26;font-weight:normal;-webkit-text-stroke:0.25px #1a1a26;letter-spacing:0.2px">API Name</div>
<div class="t" style="left:1255px;top:764.72px;font-size:19px;line-height:19px;color:#1a1a26;font-weight:normal;-webkit-text-stroke:0.25px #1a1a26;letter-spacing:0.6px">Score</div>
<div class="t" style="left:1438px;top:764.72px;font-size:19px;line-height:19px;color:#1a1a26;font-weight:normal;-webkit-text-stroke:0.25px #1a1a26;letter-spacing:0.35px">Errors</div>
<div class="t" style="left:1621px;top:764.72px;font-size:19px;line-height:19px;color:#1a1a26;font-weight:normal;-webkit-text-stroke:0.25px #1a1a26;letter-spacing:0.6px">Warnings</div>
<div class="t" style="left:1804px;top:764.72px;font-size:19px;line-height:19px;color:#1a1a26;font-weight:normal;-webkit-text-stroke:0.25px #1a1a26;letter-spacing:0.6px">Infos</div>
<div class="t" style="left:1987px;top:764.72px;font-size:19px;line-height:19px;color:#1a1a26;font-weight:normal;-webkit-text-stroke:0.25px #1a1a26;letter-spacing:0.6px">Hints</div>
<svg class="r" style="left:710px;top:799.87px;" width="80" height="80" viewBox="0 0 80 80"><g fill="#555"><ellipse cx="34" cy="20.3" rx="3.5" ry="4"/><ellipse cx="44.4" cy="20.3" rx="3.5" ry="4"/><ellipse cx="34" cy="52.6" rx="3.5" ry="4"/><ellipse cx="44.4" cy="52.6" rx="3.5" ry="4"/><ellipse cx="23.4" cy="31.2" rx="3.5" ry="4"/><ellipse cx="23.4" cy="41.7" rx="3.5" ry="4"/><ellipse cx="55.1" cy="31.2" rx="3.5" ry="4"/><ellipse cx="55.1" cy="41.7" rx="3.5" ry="4"/></g><rect x="29" y="26.2" width="20.8" height="20.5" fill="#d4737a"/><g fill="#fff"><circle cx="35.5" cy="32.7" r="2.8"/><circle cx="43.6" cy="32.7" r="2.8"/><circle cx="35.5" cy="40.8" r="2.8"/><circle cx="43.6" cy="40.8" r="2.8"/></g><g stroke="#d4737a" stroke-width="2" stroke-linecap="butt"><path d="M22.5 24.5 L27 20"/><path d="M51 20 L56 24.5"/><path d="M22.5 48.5 L27 53"/><path d="M51 53 L56 48.5"/></g></svg>
<div class="t" style="left:784.5px;top:828.03px;font-size:18px;line-height:18px;color:#0d5a5e;font-weight:normal;text-decoration:underline;text-decoration-thickness:2.4px;text-underline-offset:2px;letter-spacing:1.3px">1111</div>
<div class="r" style="left:1255px;top:821.16px;width:88.5px;height:31px;background:#e2faf0;border-radius:16px"></div>
<svg class="r" style="left:1264.5px;top:824.66px;" width="24" height="24" viewBox="0 0 24 24"><path d="M3.7 4.9 L12.1 2.8 L20.2 4.9 L18.8 17.8 Q18.5 20.6 12.1 20.6 Q5.8 20.6 5.5 17.8 Z" fill="none" stroke="#0b0b0b" stroke-width="1.95" stroke-linejoin="round"/><path d="M8.4 11.5 L11.6 14.6 L16.5 9.7" fill="none" stroke="#0b0b0b" stroke-width="1.95" stroke-linecap="round" stroke-linejoin="round"/></svg>
<div class="t" style="left:1293.2px;top:829.07px;font-size:16.3px;line-height:16.3px;color:#111;font-weight:normal;transform:scaleX(0.92);transform-origin:0 0">100%</div>
<div class="r" style="left:1438px;top:821.16px;width:32px;height:31px;background:#e6e6ec;border-radius:50%"></div>
<div class="t" style="left:1449.2px;top:830.01px;font-size:14.6px;line-height:14.6px;color:#111;font-weight:normal;-webkit-text-stroke:0.15px #111">0</div>
<div class="r" style="left:1621px;top:821.16px;width:32px;height:31px;background:#e6e6ec;border-radius:50%"></div>
<div class="t" style="left:1632.2px;top:830.01px;font-size:14.6px;line-height:14.6px;color:#111;font-weight:normal;-webkit-text-stroke:0.15px #111">0</div>
<div class="r" style="left:1804px;top:821.16px;width:32px;height:31px;background:#e6e6ec;border-radius:50%"></div>
<div class="t" style="left:1815.2px;top:830.01px;font-size:14.6px;line-height:14.6px;color:#111;font-weight:normal;-webkit-text-stroke:0.15px #111">0</div>
<div class="r" style="left:1987px;top:821.16px;width:32px;height:31px;background:#e6e6ec;border-radius:50%"></div>
<div class="t" style="left:1998.2px;top:830.01px;font-size:14.6px;line-height:14.6px;color:#111;font-weight:normal;-webkit-text-stroke:0.15px #111">0</div>
<svg class="r" style="left:2176px;top:827.66px;" width="34" height="26" viewBox="0 0 34 26"><path d="M4 12.9 C9.5 -0.5 25 -0.5 30.5 12.9 C25 26.3 9.5 26.3 4 12.9 Z" fill="none" stroke="#0b0b18" stroke-width="2.4" stroke-linejoin="round"/><circle cx="17.3" cy="12.7" r="3.6" fill="none" stroke="#0b0b18" stroke-width="2"/></svg>
<div class="r" style="left:707px;top:870.58px;width:1524px;height:1.5px;background:#e2e2e6"></div>
<svg class="r" style="left:710px;top:869.20px;" width="80" height="80" viewBox="0 0 80 80"><g fill="#555"><ellipse cx="34" cy="20.3" rx="3.5" ry="4"/><ellipse cx="44.4" cy="20.3" rx="3.5" ry="4"/><ellipse cx="34" cy="52.6" rx="3.5" ry="4"/><ellipse cx="44.4" cy="52.6" rx="3.5" ry="4"/><ellipse cx="23.4" cy="31.2" rx="3.5" ry="4"/><ellipse cx="23.4" cy="41.7" rx="3.5" ry="4"/><ellipse cx="55.1" cy="31.2" rx="3.5" ry="4"/><ellipse cx="55.1" cy="41.7" rx="3.5" ry="4"/></g><rect x="29" y="26.2" width="20.8" height="20.5" fill="#d4737a"/><g fill="#fff"><circle cx="35.5" cy="32.7" r="2.8"/><circle cx="43.6" cy="32.7" r="2.8"/><circle cx="35.5" cy="40.8" r="2.8"/><circle cx="43.6" cy="40.8" r="2.8"/></g><g stroke="#d4737a" stroke-width="2" stroke-linecap="butt"><path d="M22.5 24.5 L27 20"/><path d="M51 20 L56 24.5"/><path d="M22.5 48.5 L27 53"/><path d="M51 53 L56 48.5"/></g></svg>
<div class="t" style="left:784.5px;top:897.36px;font-size:18px;line-height:18px;color:#0d5a5e;font-weight:normal;text-decoration:underline;text-decoration-thickness:2.4px;text-underline-offset:2px;letter-spacing:0.8px">1405</div>
<div class="r" style="left:1255px;top:890.50px;width:88.5px;height:31px;background:#e2faf0;border-radius:16px"></div>
<svg class="r" style="left:1264.5px;top:894.00px;" width="24" height="24" viewBox="0 0 24 24"><path d="M3.7 4.9 L12.1 2.8 L20.2 4.9 L18.8 17.8 Q18.5 20.6 12.1 20.6 Q5.8 20.6 5.5 17.8 Z" fill="none" stroke="#0b0b0b" stroke-width="1.95" stroke-linejoin="round"/><path d="M8.4 11.5 L11.6 14.6 L16.5 9.7" fill="none" stroke="#0b0b0b" stroke-width="1.95" stroke-linecap="round" stroke-linejoin="round"/></svg>
<div class="t" style="left:1293.2px;top:898.40px;font-size:16.3px;line-height:16.3px;color:#111;font-weight:normal;transform:scaleX(0.92);transform-origin:0 0">100%</div>
<div class="r" style="left:1438px;top:890.50px;width:32px;height:31px;background:#e6e6ec;border-radius:50%"></div>
<div class="t" style="left:1449.2px;top:899.34px;font-size:14.6px;line-height:14.6px;color:#111;font-weight:normal;-webkit-text-stroke:0.15px #111">0</div>
<div class="r" style="left:1621px;top:890.50px;width:32px;height:31px;background:#e6e6ec;border-radius:50%"></div>
<div class="t" style="left:1632.2px;top:899.34px;font-size:14.6px;line-height:14.6px;color:#111;font-weight:normal;-webkit-text-stroke:0.15px #111">0</div>
<div class="r" style="left:1804px;top:890.50px;width:32px;height:31px;background:#e6e6ec;border-radius:50%"></div>
<div class="t" style="left:1815.2px;top:899.34px;font-size:14.6px;line-height:14.6px;color:#111;font-weight:normal;-webkit-text-stroke:0.15px #111">0</div>
<div class="r" style="left:1987px;top:890.50px;width:32px;height:31px;background:#e6e6ec;border-radius:50%"></div>
<div class="t" style="left:1998.2px;top:899.34px;font-size:14.6px;line-height:14.6px;color:#111;font-weight:normal;-webkit-text-stroke:0.15px #111">0</div>
<svg class="r" style="left:2176px;top:897.00px;" width="34" height="26" viewBox="0 0 34 26"><path d="M4 12.9 C9.5 -0.5 25 -0.5 30.5 12.9 C25 26.3 9.5 26.3 4 12.9 Z" fill="none" stroke="#0b0b18" stroke-width="2.4" stroke-linejoin="round"/><circle cx="17.3" cy="12.7" r="3.6" fill="none" stroke="#0b0b18" stroke-width="2"/></svg>
<div class="r" style="left:707px;top:939.91px;width:1524px;height:1.5px;background:#e2e2e6"></div>
<svg class="r" style="left:710px;top:938.52px;" width="80" height="80" viewBox="0 0 80 80"><g fill="#555"><ellipse cx="34" cy="20.3" rx="3.5" ry="4"/><ellipse cx="44.4" cy="20.3" rx="3.5" ry="4"/><ellipse cx="34" cy="52.6" rx="3.5" ry="4"/><ellipse cx="44.4" cy="52.6" rx="3.5" ry="4"/><ellipse cx="23.4" cy="31.2" rx="3.5" ry="4"/><ellipse cx="23.4" cy="41.7" rx="3.5" ry="4"/><ellipse cx="55.1" cy="31.2" rx="3.5" ry="4"/><ellipse cx="55.1" cy="41.7" rx="3.5" ry="4"/></g><rect x="29" y="26.2" width="20.8" height="20.5" fill="#d4737a"/><g fill="#fff"><circle cx="35.5" cy="32.7" r="2.8"/><circle cx="43.6" cy="32.7" r="2.8"/><circle cx="35.5" cy="40.8" r="2.8"/><circle cx="43.6" cy="40.8" r="2.8"/></g><g stroke="#d4737a" stroke-width="2" stroke-linecap="butt"><path d="M22.5 24.5 L27 20"/><path d="M51 20 L56 24.5"/><path d="M22.5 48.5 L27 53"/><path d="M51 53 L56 48.5"/></g></svg>
<div class="t" style="left:784.5px;top:966.69px;font-size:18px;line-height:18px;color:#0d5a5e;font-weight:normal;text-decoration:underline;text-decoration-thickness:2.4px;text-underline-offset:2px;letter-spacing:0.71px">WebhookTest</div>
<div class="r" style="left:1255px;top:959.82px;width:88.5px;height:31px;background:#e2faf0;border-radius:16px"></div>
<svg class="r" style="left:1264.5px;top:963.32px;" width="24" height="24" viewBox="0 0 24 24"><path d="M3.7 4.9 L12.1 2.8 L20.2 4.9 L18.8 17.8 Q18.5 20.6 12.1 20.6 Q5.8 20.6 5.5 17.8 Z" fill="none" stroke="#0b0b0b" stroke-width="1.95" stroke-linejoin="round"/><path d="M8.4 11.5 L11.6 14.6 L16.5 9.7" fill="none" stroke="#0b0b0b" stroke-width="1.95" stroke-linecap="round" stroke-linejoin="round"/></svg>
<div class="t" style="left:1293.2px;top:967.73px;font-size:16.3px;line-height:16.3px;color:#111;font-weight:normal;transform:scaleX(0.92);transform-origin:0 0">100%</div>
<div class="r" style="left:1438px;top:959.82px;width:32px;height:31px;background:#e6e6ec;border-radius:50%"></div>
<div class="t" style="left:1449.2px;top:968.67px;font-size:14.6px;line-height:14.6px;color:#111;font-weight:normal;-webkit-text-stroke:0.15px #111">0</div>
<div class="r" style="left:1621px;top:959.82px;width:32px;height:31px;background:#e6e6ec;border-radius:50%"></div>
<div class="t" style="left:1632.2px;top:968.67px;font-size:14.6px;line-height:14.6px;color:#111;font-weight:normal;-webkit-text-stroke:0.15px #111">0</div>
<div class="r" style="left:1804px;top:959.82px;width:32px;height:31px;background:#e6e6ec;border-radius:50%"></div>
<div class="t" style="left:1815.2px;top:968.67px;font-size:14.6px;line-height:14.6px;color:#111;font-weight:normal;-webkit-text-stroke:0.15px #111">0</div>
<div class="r" style="left:1987px;top:959.82px;width:32px;height:31px;background:#e6e6ec;border-radius:50%"></div>
<div class="t" style="left:1998.2px;top:968.67px;font-size:14.6px;line-height:14.6px;color:#111;font-weight:normal;-webkit-text-stroke:0.15px #111">0</div>
<svg class="r" style="left:2176px;top:966.32px;" width="34" height="26" viewBox="0 0 34 26"><path d="M4 12.9 C9.5 -0.5 25 -0.5 30.5 12.9 C25 26.3 9.5 26.3 4 12.9 Z" fill="none" stroke="#0b0b18" stroke-width="2.4" stroke-linejoin="round"/><circle cx="17.3" cy="12.7" r="3.6" fill="none" stroke="#0b0b18" stroke-width="2"/></svg>
<div class="r" style="left:707px;top:1009.24px;width:1524px;height:1.5px;background:#e2e2e6"></div>
<svg class="r" style="left:710px;top:1007.86px;" width="80" height="80" viewBox="0 0 80 80"><g fill="#555"><ellipse cx="34" cy="20.3" rx="3.5" ry="4"/><ellipse cx="44.4" cy="20.3" rx="3.5" ry="4"/><ellipse cx="34" cy="52.6" rx="3.5" ry="4"/><ellipse cx="44.4" cy="52.6" rx="3.5" ry="4"/><ellipse cx="23.4" cy="31.2" rx="3.5" ry="4"/><ellipse cx="23.4" cy="41.7" rx="3.5" ry="4"/><ellipse cx="55.1" cy="31.2" rx="3.5" ry="4"/><ellipse cx="55.1" cy="41.7" rx="3.5" ry="4"/></g><rect x="29" y="26.2" width="20.8" height="20.5" fill="#d4737a"/><g fill="#fff"><circle cx="35.5" cy="32.7" r="2.8"/><circle cx="43.6" cy="32.7" r="2.8"/><circle cx="35.5" cy="40.8" r="2.8"/><circle cx="43.6" cy="40.8" r="2.8"/></g><g stroke="#d4737a" stroke-width="2" stroke-linecap="butt"><path d="M22.5 24.5 L27 20"/><path d="M51 20 L56 24.5"/><path d="M22.5 48.5 L27 53"/><path d="M51 53 L56 48.5"/></g></svg>
<div class="t" style="left:784.5px;top:1036.02px;font-size:18px;line-height:18px;color:#0d5a5e;font-weight:normal;text-decoration:underline;text-decoration-thickness:2.4px;text-underline-offset:2px;letter-spacing:-0.05px">0_ENB</div>
<div class="r" style="left:1255px;top:1029.15px;width:88.5px;height:31px;background:#e2faf0;border-radius:16px"></div>
<svg class="r" style="left:1264.5px;top:1032.65px;" width="24" height="24" viewBox="0 0 24 24"><path d="M3.7 4.9 L12.1 2.8 L20.2 4.9 L18.8 17.8 Q18.5 20.6 12.1 20.6 Q5.8 20.6 5.5 17.8 Z" fill="none" stroke="#0b0b0b" stroke-width="1.95" stroke-linejoin="round"/><path d="M8.4 11.5 L11.6 14.6 L16.5 9.7" fill="none" stroke="#0b0b0b" stroke-width="1.95" stroke-linecap="round" stroke-linejoin="round"/></svg>
<div class="t" style="left:1293.2px;top:1037.06px;font-size:16.3px;line-height:16.3px;color:#111;font-weight:normal;transform:scaleX(0.92);transform-origin:0 0">100%</div>
<div class="r" style="left:1438px;top:1029.15px;width:32px;height:31px;background:#e6e6ec;border-radius:50%"></div>
<div class="t" style="left:1449.2px;top:1038.00px;font-size:14.6px;line-height:14.6px;color:#111;font-weight:normal;-webkit-text-stroke:0.15px #111">0</div>
<div class="r" style="left:1621px;top:1029.15px;width:32px;height:31px;background:#e6e6ec;border-radius:50%"></div>
<div class="t" style="left:1632.2px;top:1038.00px;font-size:14.6px;line-height:14.6px;color:#111;font-weight:normal;-webkit-text-stroke:0.15px #111">0</div>
<div class="r" style="left:1804px;top:1029.15px;width:32px;height:31px;background:#e6e6ec;border-radius:50%"></div>
<div class="t" style="left:1815.2px;top:1038.00px;font-size:14.6px;line-height:14.6px;color:#111;font-weight:normal;-webkit-text-stroke:0.15px #111">0</div>
<div class="r" style="left:1987px;top:1029.15px;width:32px;height:31px;background:#e6e6ec;border-radius:50%"></div>
<div class="t" style="left:1998.2px;top:1038.00px;font-size:14.6px;line-height:14.6px;color:#111;font-weight:normal;-webkit-text-stroke:0.15px #111">0</div>
<svg class="r" style="left:2176px;top:1035.65px;" width="34" height="26" viewBox="0 0 34 26"><path d="M4 12.9 C9.5 -0.5 25 -0.5 30.5 12.9 C25 26.3 9.5 26.3 4 12.9 Z" fill="none" stroke="#0b0b18" stroke-width="2.4" stroke-linejoin="round"/><circle cx="17.3" cy="12.7" r="3.6" fill="none" stroke="#0b0b18" stroke-width="2"/></svg>
<div class="r" style="left:707px;top:1078.57px;width:1524px;height:1.5px;background:#e2e2e6"></div>
<svg class="r" style="left:710px;top:1077.18px;" width="80" height="80" viewBox="0 0 80 80"><g fill="#555"><ellipse cx="34" cy="20.3" rx="3.5" ry="4"/><ellipse cx="44.4" cy="20.3" rx="3.5" ry="4"/><ellipse cx="34" cy="52.6" rx="3.5" ry="4"/><ellipse cx="44.4" cy="52.6" rx="3.5" ry="4"/><ellipse cx="23.4" cy="31.2" rx="3.5" ry="4"/><ellipse cx="23.4" cy="41.7" rx="3.5" ry="4"/><ellipse cx="55.1" cy="31.2" rx="3.5" ry="4"/><ellipse cx="55.1" cy="41.7" rx="3.5" ry="4"/></g><rect x="29" y="26.2" width="20.8" height="20.5" fill="#d4737a"/><g fill="#fff"><circle cx="35.5" cy="32.7" r="2.8"/><circle cx="43.6" cy="32.7" r="2.8"/><circle cx="35.5" cy="40.8" r="2.8"/><circle cx="43.6" cy="40.8" r="2.8"/></g><g stroke="#d4737a" stroke-width="2" stroke-linecap="butt"><path d="M22.5 24.5 L27 20"/><path d="M51 20 L56 24.5"/><path d="M22.5 48.5 L27 53"/><path d="M51 53 L56 48.5"/></g></svg>
<div class="t" style="left:784.5px;top:1105.35px;font-size:18px;line-height:18px;color:#0d5a5e;font-weight:normal;text-decoration:underline;text-decoration-thickness:2.4px;text-underline-offset:2px;letter-spacing:0.95px">Marek-Json_validation</div>
<div class="r" style="left:1255px;top:1098.48px;width:88.5px;height:31px;background:#e2faf0;border-radius:16px"></div>
<svg class="r" style="left:1264.5px;top:1101.98px;" width="24" height="24" viewBox="0 0 24 24"><path d="M3.7 4.9 L12.1 2.8 L20.2 4.9 L18.8 17.8 Q18.5 20.6 12.1 20.6 Q5.8 20.6 5.5 17.8 Z" fill="none" stroke="#0b0b0b" stroke-width="1.95" stroke-linejoin="round"/><path d="M8.4 11.5 L11.6 14.6 L16.5 9.7" fill="none" stroke="#0b0b0b" stroke-width="1.95" stroke-linecap="round" stroke-linejoin="round"/></svg>
<div class="t" style="left:1293.2px;top:1106.39px;font-size:16.3px;line-height:16.3px;color:#111;font-weight:normal;transform:scaleX(0.92);transform-origin:0 0">100%</div>
<div class="r" style="left:1438px;top:1098.48px;width:32px;height:31px;background:#e6e6ec;border-radius:50%"></div>
<div class="t" style="left:1449.2px;top:1107.33px;font-size:14.6px;line-height:14.6px;color:#111;font-weight:normal;-webkit-text-stroke:0.15px #111">0</div>
<div class="r" style="left:1621px;top:1098.48px;width:32px;height:31px;background:#e6e6ec;border-radius:50%"></div>
<div class="t" style="left:1632.2px;top:1107.33px;font-size:14.6px;line-height:14.6px;color:#111;font-weight:normal;-webkit-text-stroke:0.15px #111">0</div>
<div class="r" style="left:1804px;top:1098.48px;width:32px;height:31px;background:#e6e6ec;border-radius:50%"></div>
<div class="t" style="left:1815.2px;top:1107.33px;font-size:14.6px;line-height:14.6px;color:#111;font-weight:normal;-webkit-text-stroke:0.15px #111">0</div>
<div class="r" style="left:1987px;top:1098.48px;width:32px;height:31px;background:#e6e6ec;border-radius:50%"></div>
<div class="t" style="left:1998.2px;top:1107.33px;font-size:14.6px;line-height:14.6px;color:#111;font-weight:normal;-webkit-text-stroke:0.15px #111">0</div>
<svg class="r" style="left:2176px;top:1104.98px;" width="34" height="26" viewBox="0 0 34 26"><path d="M4 12.9 C9.5 -0.5 25 -0.5 30.5 12.9 C25 26.3 9.5 26.3 4 12.9 Z" fill="none" stroke="#0b0b18" stroke-width="2.4" stroke-linejoin="round"/><circle cx="17.3" cy="12.7" r="3.6" fill="none" stroke="#0b0b18" stroke-width="2"/></svg>
<div class="r" style="left:707px;top:1147.90px;width:1524px;height:1.5px;background:#e2e2e6"></div>
<svg class="r" style="left:710px;top:1146.52px;" width="80" height="80" viewBox="0 0 80 80"><g fill="#555"><ellipse cx="34" cy="20.3" rx="3.5" ry="4"/><ellipse cx="44.4" cy="20.3" rx="3.5" ry="4"/><ellipse cx="34" cy="52.6" rx="3.5" ry="4"/><ellipse cx="44.4" cy="52.6" rx="3.5" ry="4"/><ellipse cx="23.4" cy="31.2" rx="3.5" ry="4"/><ellipse cx="23.4" cy="41.7" rx="3.5" ry="4"/><ellipse cx="55.1" cy="31.2" rx="3.5" ry="4"/><ellipse cx="55.1" cy="41.7" rx="3.5" ry="4"/></g><rect x="29" y="26.2" width="20.8" height="20.5" fill="#d4737a"/><g fill="#fff"><circle cx="35.5" cy="32.7" r="2.8"/><circle cx="43.6" cy="32.7" r="2.8"/><circle cx="35.5" cy="40.8" r="2.8"/><circle cx="43.6" cy="40.8" r="2.8"/></g><g stroke="#d4737a" stroke-width="2" stroke-linecap="butt"><path d="M22.5 24.5 L27 20"/><path d="M51 20 L56 24.5"/><path d="M22.5 48.5 L27 53"/><path d="M51 53 L56 48.5"/></g></svg>
<div class="t" style="left:784.5px;top:1174.68px;font-size:18px;line-height:18px;color:#0d5a5e;font-weight:normal;text-decoration:underline;text-decoration-thickness:2.4px;text-underline-offset:2px;letter-spacing:0.95px">Marek-Test</div>
<div class="r" style="left:1255px;top:1167.82px;width:88.5px;height:31px;background:#e2faf0;border-radius:16px"></div>
<svg class="r" style="left:1264.5px;top:1171.32px;" width="24" height="24" viewBox="0 0 24 24"><path d="M3.7 4.9 L12.1 2.8 L20.2 4.9 L18.8 17.8 Q18.5 20.6 12.1 20.6 Q5.8 20.6 5.5 17.8 Z" fill="none" stroke="#0b0b0b" stroke-width="1.95" stroke-linejoin="round"/><path d="M8.4 11.5 L11.6 14.6 L16.5 9.7" fill="none" stroke="#0b0b0b" stroke-width="1.95" stroke-linecap="round" stroke-linejoin="round"/></svg>
<div class="t" style="left:1293.2px;top:1175.72px;font-size:16.3px;line-height:16.3px;color:#111;font-weight:normal;transform:scaleX(0.92);transform-origin:0 0">100%</div>
<div class="r" style="left:1438px;top:1167.82px;width:32px;height:31px;background:#e6e6ec;border-radius:50%"></div>
<div class="t" style="left:1449.2px;top:1176.66px;font-size:14.6px;line-height:14.6px;color:#111;font-weight:normal;-webkit-text-stroke:0.15px #111">0</div>
<div class="r" style="left:1621px;top:1167.82px;width:32px;height:31px;background:#e6e6ec;border-radius:50%"></div>
<div class="t" style="left:1632.2px;top:1176.66px;font-size:14.6px;line-height:14.6px;color:#111;font-weight:normal;-webkit-text-stroke:0.15px #111">0</div>
<div class="r" style="left:1804px;top:1167.82px;width:32px;height:31px;background:#e6e6ec;border-radius:50%"></div>
<div class="t" style="left:1815.2px;top:1176.66px;font-size:14.6px;line-height:14.6px;color:#111;font-weight:normal;-webkit-text-stroke:0.15px #111">0</div>
<div class="r" style="left:1987px;top:1167.82px;width:32px;height:31px;background:#e6e6ec;border-radius:50%"></div>
<div class="t" style="left:1998.2px;top:1176.66px;font-size:14.6px;line-height:14.6px;color:#111;font-weight:normal;-webkit-text-stroke:0.15px #111">0</div>
<svg class="r" style="left:2176px;top:1174.32px;" width="34" height="26" viewBox="0 0 34 26"><path d="M4 12.9 C9.5 -0.5 25 -0.5 30.5 12.9 C25 26.3 9.5 26.3 4 12.9 Z" fill="none" stroke="#0b0b18" stroke-width="2.4" stroke-linejoin="round"/><circle cx="17.3" cy="12.7" r="3.6" fill="none" stroke="#0b0b18" stroke-width="2"/></svg>
<div class="r" style="left:707px;top:1217.23px;width:1524px;height:1.5px;background:#e2e2e6"></div>
<svg class="r" style="left:710px;top:1215.85px;" width="80" height="80" viewBox="0 0 80 80"><g fill="#555"><ellipse cx="34" cy="20.3" rx="3.5" ry="4"/><ellipse cx="44.4" cy="20.3" rx="3.5" ry="4"/><ellipse cx="34" cy="52.6" rx="3.5" ry="4"/><ellipse cx="44.4" cy="52.6" rx="3.5" ry="4"/><ellipse cx="23.4" cy="31.2" rx="3.5" ry="4"/><ellipse cx="23.4" cy="41.7" rx="3.5" ry="4"/><ellipse cx="55.1" cy="31.2" rx="3.5" ry="4"/><ellipse cx="55.1" cy="41.7" rx="3.5" ry="4"/></g><rect x="29" y="26.2" width="20.8" height="20.5" fill="#d4737a"/><g fill="#fff"><circle cx="35.5" cy="32.7" r="2.8"/><circle cx="43.6" cy="32.7" r="2.8"/><circle cx="35.5" cy="40.8" r="2.8"/><circle cx="43.6" cy="40.8" r="2.8"/></g><g stroke="#d4737a" stroke-width="2" stroke-linecap="butt"><path d="M22.5 24.5 L27 20"/><path d="M51 20 L56 24.5"/><path d="M22.5 48.5 L27 53"/><path d="M51 53 L56 48.5"/></g></svg>
<div class="t" style="left:784.5px;top:1244.01px;font-size:18px;line-height:18px;color:#0d5a5e;font-weight:normal;text-decoration:underline;text-decoration-thickness:2.4px;text-underline-offset:2px;letter-spacing:0.16px">ACI Demo</div>
<div class="r" style="left:1255px;top:1237.14px;width:88.5px;height:31px;background:#e2faf0;border-radius:16px"></div>
<svg class="r" style="left:1264.5px;top:1240.64px;" width="24" height="24" viewBox="0 0 24 24"><path d="M3.7 4.9 L12.1 2.8 L20.2 4.9 L18.8 17.8 Q18.5 20.6 12.1 20.6 Q5.8 20.6 5.5 17.8 Z" fill="none" stroke="#0b0b0b" stroke-width="1.95" stroke-linejoin="round"/><path d="M8.4 11.5 L11.6 14.6 L16.5 9.7" fill="none" stroke="#0b0b0b" stroke-width="1.95" stroke-linecap="round" stroke-linejoin="round"/></svg>
<div class="t" style="left:1293.2px;top:1245.05px;font-size:16.3px;line-height:16.3px;color:#111;font-weight:normal;transform:scaleX(0.92);transform-origin:0 0">100%</div>
<div class="r" style="left:1438px;top:1237.14px;width:32px;height:31px;background:#e6e6ec;border-radius:50%"></div>
<div class="t" style="left:1449.2px;top:1245.99px;font-size:14.6px;line-height:14.6px;color:#111;font-weight:normal;-webkit-text-stroke:0.15px #111">0</div>
<div class="r" style="left:1621px;top:1237.14px;width:32px;height:31px;background:#e6e6ec;border-radius:50%"></div>
<div class="t" style="left:1632.2px;top:1245.99px;font-size:14.6px;line-height:14.6px;color:#111;font-weight:normal;-webkit-text-stroke:0.15px #111">0</div>
<div class="r" style="left:1804px;top:1237.14px;width:32px;height:31px;background:#e6e6ec;border-radius:50%"></div>
<div class="t" style="left:1815.2px;top:1245.99px;font-size:14.6px;line-height:14.6px;color:#111;font-weight:normal;-webkit-text-stroke:0.15px #111">0</div>
<div class="r" style="left:1987px;top:1237.14px;width:32px;height:31px;background:#e6e6ec;border-radius:50%"></div>
<div class="t" style="left:1998.2px;top:1245.99px;font-size:14.6px;line-height:14.6px;color:#111;font-weight:normal;-webkit-text-stroke:0.15px #111">0</div>
<svg class="r" style="left:2176px;top:1243.64px;" width="34" height="26" viewBox="0 0 34 26"><path d="M4 12.9 C9.5 -0.5 25 -0.5 30.5 12.9 C25 26.3 9.5 26.3 4 12.9 Z" fill="none" stroke="#0b0b18" stroke-width="2.4" stroke-linejoin="round"/><circle cx="17.3" cy="12.7" r="3.6" fill="none" stroke="#0b0b18" stroke-width="2"/></svg>
<div class="r" style="left:0px;top:1256px;width:733px;height:28px;background:#1f201f;border-top-right-radius:5px"></div>
<div class="t" style="left:7.4px;top:1261.87px;font-size:17.4px;line-height:17.4px;color:#dadada;font-weight:normal;letter-spacing:0px">https://apim-master-console.team-apim.gravitee.dev/#!/fr-apim-master-dev/api-score/rulesets</div>

</body></html>
